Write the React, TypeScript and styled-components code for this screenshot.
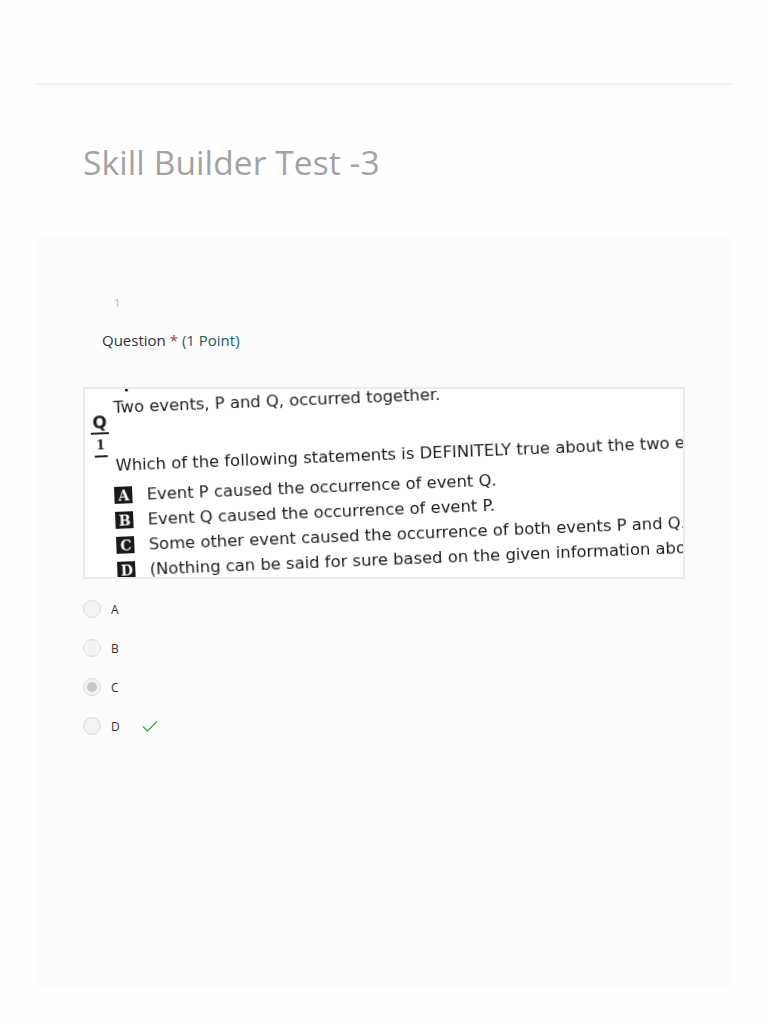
import React from 'react';
import styled, { createGlobalStyle } from 'styled-components';

const GlobalStyle = createGlobalStyle`
  html, body {
    margin: 0;
    padding: 0;
    background: #fefefe;
    font-family: 'Open Sans', 'Noto Sans', sans-serif;
  }
`;

const Page = styled.div`
  display: flex;
  flex-direction: column;
  align-items: center;
  min-height: 1024px;
`;

const TopBar = styled.div`
  width: 696px;
  height: 83px;
  border-bottom: 2px solid #f3f3f3;
  box-shadow: 0 2px 3px rgba(0, 0, 0, 0.015);
`;

const Title = styled.h1`
  width: 696px;
  box-sizing: border-box;
  margin: 0;
  padding: 54px 0 0 47px;
  height: 152px;
  font-size: 33.5px;
  font-weight: 400;
  color: #a3a3a3;
  letter-spacing: 0.1px;
`;

const Card = styled.div`
  width: 696px;
  height: 751px;
  box-sizing: border-box;
  background: #fcfcfc;
  padding: 58px 47px 0 47px;
`;

const Number = styled.div`
  padding-left: 31px;
  font-size: 11px;
  color: #b8b8b8;
  height: 20px;
`;

const QuestionLabel = styled.div`
  margin-top: 15px;
  padding-left: 19px;
  font-size: 15px;
  color: #333;
`;

const Star = styled.span`
  color: #b8323a;
`;

const Points = styled.span`
  color: #11625f;
`;

const ImageBox = styled.div`
  margin-top: 37px;
  width: 602px;
  height: 192px;
  box-sizing: border-box;
  border: 2px solid #e4edf1;
  background: #fff;
  overflow: hidden;
`;

const Scan = styled.div`
  display: flex;
  gap: 5px;
  padding: 0 0 0 4px;
  margin-top: -1px;
  transform: rotate(-2.3deg);
  transform-origin: 0 0;
  font-family: 'DejaVu Sans', sans-serif;
  font-size: 16.4px;
  color: #1d1d1d;
  filter: blur(0.25px);
`;

const QMark = styled.div`
  display: flex;
  flex-direction: column;
  align-items: center;
  gap: 3px;
  width: 20px;
  padding-top: 27px;
  font-weight: bold;
  line-height: 16px;
  span {
    font-size: 17px;
    padding: 0 2px 2px;
    border-bottom: 2px solid #222;
  }
  span + span {
    font-family: 'DejaVu Serif', serif;
    font-size: 13px;
  }
`;

const Lines = styled.div`
  display: flex;
  flex-direction: column;
  white-space: nowrap;
`;

const Line = styled.div<{ $gap?: number }>`
  margin-top: ${(p) => p.$gap ?? 0}px;
  line-height: 22px;
`;

const Cut = styled.div`
  height: 10px;
  line-height: 0px;
  padding-left: 4px;
  font-weight: bold;
  overflow: hidden;
`;

const OptionLine = styled.div`
  display: flex;
  align-items: center;
  gap: 14px;
  height: 25px;
  margin-left: -2px;
`;

const LetterBox = styled.span`
  display: inline-flex;
  align-items: center;
  justify-content: center;
  width: 18px;
  height: 17px;
  background: #1a1a1a;
  color: #fff;
  font-weight: bold;
  font-size: 14px;
  font-family: 'DejaVu Serif', serif;
`;

const Choices = styled.div`
  display: flex;
  flex-direction: column;
  gap: 19px;
  margin-top: 20px;
`;

const Choice = styled.label`
  display: flex;
  align-items: center;
  gap: 10px;
  height: 20px;
  font-size: 12px;
  color: #333;
`;

const Radio = styled.span<{ $checked?: boolean }>`
  position: relative;
  width: 16px;
  height: 16px;
  border-radius: 50%;
  border: 1px solid #dcdcdc;
  background: #f3f3f3;
  &::after {
    content: '';
    display: ${(p) => (p.$checked ? 'block' : 'none')};
    position: absolute;
    left: 3px;
    top: 3px;
    width: 10px;
    height: 10px;
    border-radius: 50%;
    background: #c8c8c8;
  }
`;

const Check = styled.svg`
  margin-left: 12px;
`;

const options = ['A', 'B', 'C', 'D'];

const statements = [
  'Event P caused the occurrence of event Q.',
  'Event Q caused the occurrence of event P.',
  'Some other event caused the occurrence of both events P and Q.',
  '(Nothing can be said for sure based on the given information about P and Q.)',
];

const App = () => {
  return (
    <>
      <GlobalStyle />
      <Page>
        <TopBar />
        <Title>Skill Builder Test -3</Title>
        <Card>
          <Number>1</Number>
          <QuestionLabel>
            Question <Star>*</Star> <Points>(1 Point)</Points>
          </QuestionLabel>
          <ImageBox>
            <Scan>
              <QMark>
                <span>Q</span>
                <span>1</span>
              </QMark>
              <Lines>
                <Cut>-.</Cut>
                <Line>Two events, P and Q, occurred together.</Line>
                <Line $gap={36}>
                  Which of the following statements is DEFINITELY true about the two events?
                </Line>
                <Line $gap={6} />
                {statements.map((s, i) => (
                  <OptionLine key={i}>
                    <LetterBox>{options[i]}</LetterBox>
                    <span>{s}</span>
                  </OptionLine>
                ))}
              </Lines>
            </Scan>
          </ImageBox>
          <Choices>
            {options.map((o) => (
              <Choice key={o}>
                <Radio $checked={o === 'C'} />
                {o}
                {o === 'D' && (
                  <Check width="16" height="12" viewBox="0 0 16 12">
                    <path d="M1 6.5 L5.5 11 L15 1.5" fill="none" stroke="#3cb04c" strokeWidth="1.4" />
                  </Check>
                )}
              </Choice>
            ))}
          </Choices>
        </Card>
      </Page>
    </>
  );
};

export default App;
